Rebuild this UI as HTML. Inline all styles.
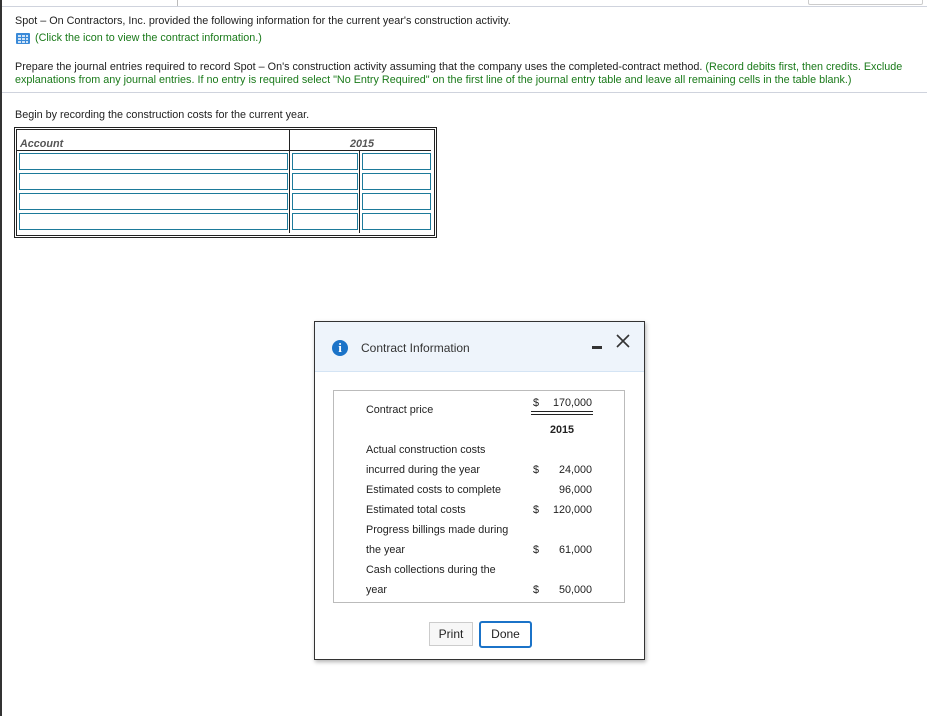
<!DOCTYPE html>
<html><head><style>
body{margin:0;width:927px;height:716px;background:#fff;font-family:"Liberation Sans",sans-serif;font-size:10.8px;color:#222;position:relative;overflow:hidden}
.a{position:absolute}
.g{color:#1a7a1a}
.in{position:absolute;border:1px solid #1d7a9a;box-sizing:border-box;height:17px}
.r{position:absolute;left:366px}
.d{position:absolute;left:533px}
</style></head><body>
<div class="a" style="left:0;top:0;width:2px;height:716px;background:#333"></div>
<div class="a" style="left:2px;top:6px;width:925px;height:1px;background:#cfd3dd"></div>
<div class="a" style="left:177px;top:0;width:1px;height:6px;background:#bbb"></div>
<div class="a" style="left:808px;top:-2px;width:113px;height:5px;border:1px solid #ccc;border-radius:2px"></div>
<div class="a" style="left:15px;top:15px">Spot – On Contractors, Inc. provided the following information for the current year's construction activity.</div>
<div class="a" style="left:16px;top:33px;width:14px;height:11px;background:#3a8ad8;border-radius:1px"><svg width="14" height="11"><g fill="#cfe3f7"><rect x="2" y="2" width="3" height="2"/><rect x="6" y="2" width="3" height="2"/><rect x="10" y="2" width="2" height="2"/><rect x="2" y="5" width="3" height="2"/><rect x="6" y="5" width="3" height="2"/><rect x="10" y="5" width="2" height="2"/><rect x="2" y="8" width="3" height="2"/><rect x="6" y="8" width="3" height="2"/><rect x="10" y="8" width="2" height="2"/></g></svg></div>
<div class="a g" style="left:35px;top:32px">(Click the icon to view the contract information.)</div>
<div class="a" style="left:15px;top:61px;width:895px;line-height:13px">Prepare the journal entries required to record Spot – On's construction activity assuming that the company uses the completed-contract method. <span class="g">(Record debits first, then credits. Exclude explanations from any journal entries. If no entry is required select "No Entry Required" on the first line of the journal entry table and leave all remaining cells in the table blank.)</span></div>
<div class="a" style="left:2px;top:92px;width:925px;height:1px;background:#cfd3dd"></div>
<div class="a" style="left:15px;top:109px">Begin by recording the construction costs for the current year.</div>
<div class="a" style="left:14px;top:127px;width:417px;height:105px;border:3px double #222"></div>
<div class="a" style="left:289px;top:129px;width:1px;height:104px;background:#222"></div>
<div class="a" style="left:17px;top:150px;width:414px;height:1px;background:#222"></div>
<div class="a" style="left:359px;top:151px;width:1px;height:82px;background:#222"></div>
<div class="a" style="left:20px;top:138px;font-style:italic;font-weight:bold;color:#555">Account</div>
<div class="a" style="left:350px;top:138px;font-style:italic;font-weight:bold;color:#555">2015</div>
<div class="in" style="left:19px;top:153px;width:269px"></div><div class="in" style="left:292px;top:153px;width:66px"></div><div class="in" style="left:362px;top:153px;width:69px"></div>
<div class="in" style="left:19px;top:173px;width:269px"></div><div class="in" style="left:292px;top:173px;width:66px"></div><div class="in" style="left:362px;top:173px;width:69px"></div>
<div class="in" style="left:19px;top:193px;width:269px"></div><div class="in" style="left:292px;top:193px;width:66px"></div><div class="in" style="left:362px;top:193px;width:69px"></div>
<div class="in" style="left:19px;top:213px;width:269px"></div><div class="in" style="left:292px;top:213px;width:66px"></div><div class="in" style="left:362px;top:213px;width:69px"></div>

<div class="a" style="left:314px;top:321px;width:329px;height:337px;border:1px solid #333;background:#fff;box-shadow:1px 2px 4px rgba(0,0,0,.3)">
 <div class="a" style="left:0;top:0;width:329px;height:49px;background:#eef4fb;border-bottom:1px solid #d4e4f4"></div>
 <div class="a" style="left:17px;top:18px;width:16px;height:16px;border-radius:50%;background:#1b73c8;color:#fff;font-weight:bold;font-family:'Liberation Serif',serif;font-size:13px;text-align:center;line-height:16px">i</div>
 <div class="a" style="left:46px;top:19px;font-size:12px;color:#333">Contract Information</div>
 <div class="a" style="left:277px;top:24px;width:10px;height:3px;background:#333"></div>
 <svg class="a" style="left:301px;top:12px" width="14" height="14"><path d="M1 1L13 13M13 1L1 13" stroke="#333" stroke-width="1.6"/></svg>
 <div class="a" style="left:18px;top:68px;width:290px;height:211px;border:1px solid #bbb"></div>
</div>
<div class="a" style="left:366px;top:404px">Contract price</div>
<div class="d" style="top:397px">$</div><div class="a" style="left:552px;top:397px;width:40px;text-align:right">170,000</div>
<div class="a" style="left:531px;top:411px;width:62px;height:2px;border-top:1px solid #222;border-bottom:1px solid #222"></div>
<div class="a" style="left:550px;top:424px;font-weight:bold">2015</div>
<div class="r" style="top:444px">Actual construction costs</div>
<div class="r" style="top:464px">incurred during the year</div><div class="d" style="top:464px">$</div><div class="a" style="left:552px;top:464px;width:40px;text-align:right">24,000</div>
<div class="r" style="top:484px">Estimated costs to complete</div><div class="a" style="left:552px;top:484px;width:40px;text-align:right">96,000</div>
<div class="r" style="top:504px">Estimated total costs</div><div class="d" style="top:504px">$</div><div class="a" style="left:552px;top:504px;width:40px;text-align:right">120,000</div>
<div class="r" style="top:524px">Progress billings made during</div>
<div class="r" style="top:544px">the year</div><div class="d" style="top:544px">$</div><div class="a" style="left:552px;top:544px;width:40px;text-align:right">61,000</div>
<div class="r" style="top:564px">Cash collections during the</div>
<div class="r" style="top:584px">year</div><div class="d" style="top:584px">$</div><div class="a" style="left:552px;top:584px;width:40px;text-align:right">50,000</div>
<div class="a" style="left:429px;top:622px;width:44px;height:24px;border:1px solid #ccc;background:#f7f7f7;box-sizing:border-box;text-align:center;line-height:22px;font-size:12px">Print</div>
<div class="a" style="left:479px;top:621px;width:53px;height:27px;border:2px solid #1b73c8;border-radius:3px;box-sizing:border-box;text-align:center;line-height:23px;font-size:12px">Done</div>
</body></html>
